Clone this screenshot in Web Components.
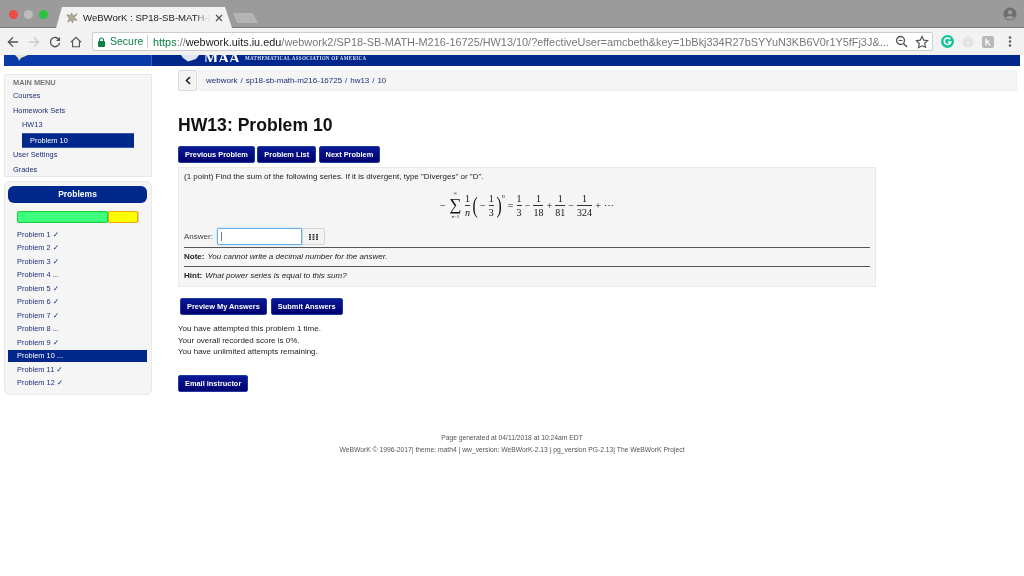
<!DOCTYPE html>
<html lang="en">
<head>
<meta charset="utf-8">
<title>WeBWorK : SP18-SB-MATH-M216</title>
<style>
html, body { margin: 0; height: 100%; background: #fff; overflow: hidden; }
body { font-family: "Liberation Sans", "DejaVu Sans", sans-serif; font-size: 8px; color: #222; filter: blur(.3px); }
.page { display: grid; grid-template-columns: 148px 839px; column-gap: 26px; padding: 4px 0 0 4px; }
</style>
</head>
<body>
<browser-chrome></browser-chrome>
<wb-banner></wb-banner>
<div class="page">
  <wb-sidebar></wb-sidebar>
  <wb-main></wb-main>
</div>
<wb-footer></wb-footer>

<script>
class browser_Chrome extends HTMLElement {
    constructor() {
        super();
        this.attachShadow({ mode: 'open' });
    }

    connectedCallback(){
        this.shadowRoot.innerHTML = `
            <style>
                :host { display: block; height: 55px; font-family: "Liberation Sans", sans-serif; }
                svg { display: block; flex: none; }
                .strip { height: 27px; background: #9b9b9b; border-bottom: 1px solid #7a7a7a; display: flex; align-items: flex-end; }
                .lights { display: flex; gap: 6px; padding: 0 0 8px 9px; width: 56px; box-sizing: border-box; }
                .lights i { width: 9px; height: 9px; border-radius: 50%; flex: none; }
                .tab { width: 176px; height: 21px; margin-bottom: -1px; background: #f2f2f2; box-sizing: border-box; padding: 0 9px 0 10px; display: flex; align-items: center; gap: 5px;
                       clip-path: polygon(0 100%, 6px 0, 169px 0, 176px 100%); font-size: 9.600px; color: #222; white-space: nowrap; }
                .tab span { flex: 1; overflow: hidden; -webkit-mask-image: linear-gradient(90deg, #000 88%, transparent); mask-image: linear-gradient(90deg, #000 88%, transparent); }
                .newtab { width: 25px; height: 10px; margin: 0 0 4px 1px; background: #b4b4b4; clip-path: polygon(0 0, 20px 0, 25px 100%, 4px 100%); }
                .who { margin-left: auto; padding: 0 7px 6px 0; }
                .bar { height: 27px; background: #f2f2f2; display: flex; align-items: center; box-sizing: border-box; padding-left: 7px; }
                .nav { display: flex; align-items: center; gap: 9px; width: 85px; flex: none; }
                .box { width: 841px; height: 19px; box-sizing: border-box; background: #fff; border: 1px solid #ccc; border-radius: 2px; display: flex; align-items: center; padding-left: 4px; font-size: 10.900px; white-space: nowrap; color: #777; flex: none; }
                .sec { color: #0b8043; display: flex; align-items: center; gap: 4px; width: 51px; box-sizing: border-box; border-right: 1px solid #ccc; margin-right: 5px; line-height: 13px; font-size: 10.500px; flex: none; }
                .url { flex: 1; }
                .url b { font-weight: normal; color: #0b8043; }
                .url em { font-style: normal; color: #222; }
                .ends { display: flex; gap: 7px; padding: 0 3px 0 5px; align-items: center; }
                .ext { display: flex; align-items: center; gap: 8px; padding-left: 8px; }
            </style>
            <div class="strip">
                <div class="lights"><i style="background:#f04c47"></i><i style="background:#bcbcbc"></i><i style="background:#2bc23f"></i></div>
                <div class="tab">
                    <svg width="12" height="12" viewBox="0 0 13 13"><path d="M1 3l4 1 1-3 1.500 3.500L12 2 9 6l3 3-4-.5L7 12 5.500 8.500 2 11l1.500-4z" fill="#b3ae93" stroke="#77735f" stroke-width=".6"/></svg>
                    <span>WeBWorK : SP18-SB-MATH-M216</span>
                    <svg width="8" height="8" viewBox="0 0 8 8"><path d="M1 1l6 6M7 1L1 7" stroke="#555" stroke-width="1.300"/></svg>
                </div>
                <div class="newtab"></div>
                <div class="who">
                    <svg width="14" height="14" viewBox="0 0 14 14"><circle cx="7" cy="7" r="6.500" fill="#6e6e6e"/><circle cx="7" cy="5.200" r="2.200" fill="#9b9b9b"/><path d="M2.800 10.600c1-2 7.400-2 8.400 0-1 1.400-2.500 2-4.200 2s-3.200-.6-4.200-2z" fill="#9b9b9b"/></svg>
                </div>
            </div>
            <div class="bar">
                <div class="nav">
                    <svg width="12" height="12" viewBox="0 0 13 13"><path d="M12 6.500H2M6.500 1.500l-5 5 5 5" fill="none" stroke="#555" stroke-width="1.500"/></svg>
                    <svg width="12" height="12" viewBox="0 0 13 13"><path d="M1 6.500h10M6.500 1.500l5 5-5 5" fill="none" stroke="#c9c9c9" stroke-width="1.500"/></svg>
                    <svg width="12" height="12" viewBox="0 0 13 13"><path d="M11 4.200A5 5 0 1 0 11.500 7.500" fill="none" stroke="#555" stroke-width="1.500"/><path d="M12 1v4.500H7.500z" fill="#555"/></svg>
                    <svg width="12" height="12" viewBox="0 0 14 13"><path d="M1 6.800L7 1l6 5.800M3 5.500V12h8V5.500" fill="none" stroke="#555" stroke-width="1.300"/></svg>
                </div>
                <div class="box">
                    <div class="sec">
                        <svg width="9" height="10" viewBox="0 0 9 10"><rect x="1" y="4" width="7" height="6" rx="1" fill="#0b8043"/><path d="M2.500 4.500V3a2 2 0 0 1 4 0v1.500" fill="none" stroke="#0b8043" stroke-width="1.200"/></svg>
                        <span>Secure</span>
                    </div>
                    <div class="url"><b>https</b>://<em>webwork.uits.iu.edu</em>/webwork2/SP18-SB-MATH-M216-16725/HW13/10/?effectiveUser=amcbeth&amp;key=1bBkj334R27bSYYuN3KB6V0r1Y5fFj3J&amp;...</div>
                    <div class="ends">
                        <svg width="13" height="13" viewBox="0 0 13 13"><circle cx="5.500" cy="5.500" r="4" fill="none" stroke="#555" stroke-width="1.300"/><path d="M8.500 8.500l3.500 3.500" stroke="#555" stroke-width="1.500"/><path d="M3.500 5.500h4" stroke="#555"/></svg>
                        <svg width="14" height="14" viewBox="0 0 14 14"><path d="M7 1.500l1.700 3.600 3.900.5-2.900 2.700.8 3.900L7 10.800l-3.500 1.900.8-3.900L1.400 5.600l3.900-.5z" fill="none" stroke="#555" stroke-width="1.200"/></svg>
                    </div>
                </div>
                <div class="ext">
                    <svg width="13" height="13" viewBox="0 0 13 13"><circle cx="6.500" cy="6.500" r="6.500" fill="#15c39a"/><path d="M9.300 4.300A3.300 3.300 0 1 0 9.800 7H7" fill="none" stroke="#fff" stroke-width="1.500"/></svg>
                    <svg width="12" height="12" viewBox="0 0 12 12"><circle cx="6" cy="6" r="5.500" fill="#e2e2e2"/><path d="M6 3v1M6 5v4" stroke="#f4f4f4" stroke-width="1.200"/></svg>
                    <svg width="12" height="12" viewBox="0 0 12 12"><rect width="12" height="12" rx="2" fill="#b9b9b9"/><path d="M4 2.500v7M4 6.500l3-2M5.500 5.500L8 9.500" fill="none" stroke="#fff" stroke-width="1.300"/></svg>
                    <svg width="12" height="13" viewBox="0 0 12 13" style="margin-left:2px"><circle cx="6" cy="2.500" r="1.200" fill="#555"/><circle cx="6" cy="6.500" r="1.200" fill="#555"/><circle cx="6" cy="10.500" r="1.200" fill="#555"/></svg>
                </div>
            </div>
        `;
    }
}

class wb_Banner extends HTMLElement {
    constructor() {
        super();
        this.attachShadow({ mode: 'open' });
    }

    connectedCallback(){
        this.shadowRoot.innerHTML = `
            <style>
                :host { display: flex; height: 11px; margin: 0 4px; background: #00288c; overflow: hidden; color: #fff; }
                svg { display: block; flex: none; }
                .logo { width: 148px; flex: none; background: #0a3aa8; border-right: 1px solid #3a5fb8; box-sizing: border-box; padding: 0 0 0 10px; }
                .maa { display: flex; align-items: flex-end; padding: 0 0 4px 29px; height: 7px; }
                .big { font: bold 15px/7px "Liberation Serif", serif; height: 7px; overflow: hidden; display: flex; align-items: flex-end; margin-left: 5px; }
                .small { font: bold 6px/7px "Liberation Serif", serif; letter-spacing: .32px; margin-left: 5px; white-space: nowrap; color: #d8dff0; transform: scaleX(.84); transform-origin: left; }
            </style>
            <div class="logo"><svg width="22" height="8" viewBox="0 0 22 8"><path d="M1 0h13L7 3 5 6 4 3z" fill="#e9e4cc"/></svg></div>
            <div class="maa">
                <svg width="18" height="7" viewBox="0 0 18 7"><path d="M0 0h18l-3 4-8 2.500L2 3z" fill="#dfe5f2"/></svg>
                <span class="big">MAA</span>
                <span class="small">MATHEMATICAL ASSOCIATION OF AMERICA</span>
            </div>
        `;
    }
}

class wb_Sidebar extends HTMLElement {
    constructor() {
        super();
        this.attachShadow({ mode: 'open' });
    }

    connectedCallback(){
        let rows = [
            ['Problem 1', '\u2713'], ['Problem 2', '\u2713'], ['Problem 3', '\u2713'], ['Problem 4', '...'],
            ['Problem 5', '\u2713'], ['Problem 6', '\u2713'], ['Problem 7', '\u2713'], ['Problem 8', '...'],
            ['Problem 9', '\u2713'], ['Problem 10', '...'], ['Problem 11', '\u2713'], ['Problem 12', '\u2713']
        ];
        let list = rows.map(r => {
            let on = r[0] === 'Problem 10' ? ' class="on"' : '';
            return `<li${on}><span>${r[0]} ${r[1]}</span></li>`;
        }).join('');
        this.shadowRoot.innerHTML = `
            <style>
                :host { display: block; margin-top: 4px; font-size: 7.400px; color: #1c2f7c; font-family: "Liberation Sans", "DejaVu Sans", sans-serif; }
                .menu, .probs { background: #f5f5f5; border: 1px solid #e9e9e9; box-sizing: border-box; }
                .menu { height: 103px; line-height: 14.700px; }
                .menu h4 { margin: 0; height: 14px; line-height: 15px; font-size: 7.400px; font-weight: bold; color: #777; padding-left: 8px; }
                .menu div { padding-left: 8px; height: 14.700px; }
                .menu .l2 { padding-left: 17px; }
                .menu .cur { margin-left: 17px; width: 112px; height: 15px; padding-left: 8px; box-sizing: border-box; background: #00288c; color: #fff; border: 1px solid #3a55a8; border-width: 1px 0; line-height: 13px; }
                .probs { height: 214px; margin-top: 4px; border-radius: 5px; padding: 4px 4px 0 3px; }
                .head { height: 17px; background: #00288c; border-radius: 6px; color: #fff; font-weight: bold; font-size: 8.500px; text-align: center; line-height: 17px; }
                .progress { display: flex; height: 12px; margin: 8px 8px 0 9px; border-radius: 2px; background: #cfcfcf; box-sizing: border-box; padding-right: 1px; }
                .progress i { display: block; box-sizing: border-box; height: 100%; border-radius: 2px; }
                .green { width: 91px; background: #3dfd7c; border: 1px solid #19d23a; }
                .yellow { width: 30px; background: #ffff00; border: 1px solid #f4a800; }
                ul { list-style: none; margin: 4.500px 0 0; padding: 0; }
                li { height: 13.500px; line-height: 13.500px; padding-left: 9px; white-space: nowrap; }
                li.on { background: #00288c; color: #fff; height: 12px; margin: 1px 0 .5px; line-height: 11.500px; }
            </style>
            <div class="menu">
                <h4>MAIN MENU</h4>
                <div>Courses</div>
                <div>Homework Sets</div>
                <div class="l2">HW13</div>
                <div class="cur">Problem 10</div>
                <div>User Settings</div>
                <div>Grades</div>
            </div>
            <div class="probs">
                <div class="head">Problems</div>
                <div class="progress"><i class="green"></i><i class="yellow"></i></div>
                <ul>${list}</ul>
            </div>
        `;
    }
}

class wb_Button extends HTMLElement {
    constructor() {
        super();
        this.attachShadow({ mode: 'open' });
    }

    connectedCallback(){
        this.shadowRoot.innerHTML = `
            <style>
                :host { display: inline-flex; height: 17px; box-sizing: border-box; padding: 0 6px; align-items: center; border-radius: 2px;
                        background: linear-gradient(#0a1a96, #00006e); border: 1px solid #1f3a9e; color: #fff; font: bold 7.400px "Liberation Sans", sans-serif; white-space: nowrap; }
            </style>
            <slot></slot>
        `;
    }
}

class wb_Frac extends HTMLElement {
    constructor() {
        super();
        this.attachShadow({ mode: 'open' });
    }

    connectedCallback(){
        let it = this.hasAttribute('it');
        this.shadowRoot.innerHTML = `
            <style>
                :host { display: inline-flex; flex-direction: column; align-items: center; font: 10px/13px "Liberation Serif", serif; color: #111; }
                .n { border-bottom: .7px solid #333; align-self: stretch; text-align: center; }
            </style>
            <div class="n">${this.getAttribute('n')}</div>
            <div style="${it ? 'font-style:italic' : ''}">${this.getAttribute('d')}</div>
        `;
    }
}

class wb_Formula extends HTMLElement {
    constructor() {
        super();
        this.attachShadow({ mode: 'open' });
    }

    connectedCallback(){
        this.shadowRoot.innerHTML = `
            <style>
                :host { display: flex; justify-content: center; align-items: center; gap: 3.100px; height: 32px; font: 10px "Liberation Serif", serif; color: #111; }
                .sum { display: flex; flex-direction: column; align-items: center; line-height: 6px; font-size: 5px; width: 13px; }
                .sum b { font: normal 17px/15px "Liberation Serif", serif; margin-bottom: 2px; }
                .paren { font: 200 24px/25px "Liberation Serif", serif; transform: scaleX(.65); margin: 0 -2px; }
                sup { font-size: 5.500px; font-style: italic; align-self: flex-start; margin: 4px 0 0 -2px; }
            </style>
            <span>&minus;</span>
            <span class="sum"><span>&infin;</span><b>&sum;</b><span><i>n</i>=1</span></span>
            <wb-frac n="1" d="n" it></wb-frac>
            <span class="paren">(</span><span>&minus;</span><wb-frac n="1" d="3"></wb-frac><span class="paren">)</span><sup>n</sup>
            <span>=</span><wb-frac n="1" d="3"></wb-frac>
            <span>&minus;</span><wb-frac n="1" d="18"></wb-frac>
            <span>+</span><wb-frac n="1" d="81"></wb-frac>
            <span>&minus;</span><wb-frac n="1" d="324"></wb-frac>
            <span>+</span><span>&#8943;</span>
        `;
    }
}

class wb_Main extends HTMLElement {
    constructor() {
        super();
        this.attachShadow({ mode: 'open' });
    }

    connectedCallback(){
        this.shadowRoot.innerHTML = `
            <style>
                :host { display: block; font: 8px "Liberation Sans", sans-serif; color: #222; }
                .crumbs { display: flex; height: 21px; gap: 1px; }
                .back { width: 19px; background: #f4f4f4; border: 1px solid #d9d9d9; border-radius: 2px; box-sizing: border-box; display: flex; align-items: center; justify-content: center; }
                .trail { flex: 1; background: #f5f5f5; border: 1px solid #eee; border-radius: 2px; padding-left: 7px; display: flex; align-items: center; color: #1c2f7c; white-space: pre; word-spacing: .7px; }
                h1 { margin: 23px 0 10px; font: bold 17.600px/22px "Liberation Sans", sans-serif; color: #111; }
                .nav { display: flex; gap: 2.500px; }
                .well { width: 698px; height: 120px; margin-top: 4px; box-sizing: border-box; background: #f5f5f5; border: 1px solid #e9e9e9; padding: 4px 5px 0 5px; }
                .q { line-height: 10px; }
                wb-formula { margin-top: 7px; }
                .ans { display: flex; align-items: center; height: 17px; margin-top: 7px; color: #444; }
                .ans span { width: 33px; }
                .input { width: 85px; height: 17px; box-sizing: border-box; background: #fff; border: 1px solid #66afe9; border-radius: 2px 0 0 2px; box-shadow: 0 0 2px #8ccaf2; display: flex; align-items: center; padding-left: 3px; }
                .input i { width: 1px; height: 9px; background: #777; }
                .grid { width: 23px; height: 17px; box-sizing: border-box; background: #f3f3f3; border: 1px solid #d5d5d5; border-radius: 0 2px 2px 0; display: flex; align-items: center; justify-content: center; }
                .note { margin-top: 2px; height: 18.500px; border-top: 1px solid #555; display: flex; align-items: center; box-sizing: border-box; }
                .note + .note { margin-top: 0; }
                .note i { margin-left: 3px; }
                .sub { display: flex; gap: 4px; margin: 11px 0 0 2px; }
                .status { margin-top: 8px; line-height: 11.500px; color: #222; }
                .mail { margin-top: 17px; }
            </style>
            <div class="crumbs">
                <div class="back"><svg width="6" height="9" viewBox="0 0 6 9"><path d="M5 1L1.500 4.500 5 8" fill="none" stroke="#222" stroke-width="1.600"/></svg></div>
                <div class="trail">webwork / sp18-sb-math-m216-16725 / hw13 / 10</div>
            </div>
            <h1>HW13: Problem 10</h1>
            <div class="nav">
                <wb-button>Previous Problem</wb-button>
                <wb-button>Problem List</wb-button>
                <wb-button>Next Problem</wb-button>
            </div>
            <div class="well">
                <div class="q">(1 point) Find the sum of the following series. If it is divergent, type "Diverges" or "D".</div>
                <wb-formula></wb-formula>
                <div class="ans">
                    <span>Answer:</span>
                    <div class="input"><i></i></div>
                    <div class="grid"><svg width="9" height="6" viewBox="0 0 9 6" fill="#333"><path d="M0 0h2v1.500H0zM3.500 0h2v1.500h-2zM7 0h2v1.500H7zM0 2.300h2v1.500H0zM3.500 2.300h2v1.500h-2zM7 2.300h2v1.500H7zM0 4.500h2V6H0zM3.500 4.500h2V6h-2zM7 4.500h2V6H7z"/></svg></div>
                </div>
                <div class="note"><b>Note:</b><i>You cannot write a decimal number for the answer.</i></div>
                <div class="note"><b>Hint:</b><i>What power series is equal to this sum?</i></div>
            </div>
            <div class="sub">
                <wb-button>Preview My Answers</wb-button>
                <wb-button>Submit Answers</wb-button>
            </div>
            <div class="status">You have attempted this problem 1 time.<br>Your overall recorded score is 0%.<br>You have unlimited attempts remaining.</div>
            <div class="mail"><wb-button>Email instructor</wb-button></div>
        `;
    }
}

class wb_Footer extends HTMLElement {
    constructor() {
        super();
        this.attachShadow({ mode: 'open' });
    }

    connectedCallback(){
        this.shadowRoot.innerHTML = `
            <style>
                :host { display: block; margin-top: 37px; text-align: center; font: 6.750px/12px "Liberation Sans", sans-serif; color: #555; }
            </style>
            <div>Page generated at 04/11/2018 at 10:24am EDT</div>
            <div>WeBWorK &copy; 1996-2017| theme: math4 | ww_version: WeBWorK-2.13 | pg_version PG-2.13| The WeBWorK Project</div>
        `;
    }
}

customElements.define('browser-chrome', browser_Chrome);
customElements.define('wb-banner', wb_Banner);
customElements.define('wb-sidebar', wb_Sidebar);
customElements.define('wb-button', wb_Button);
customElements.define('wb-frac', wb_Frac);
customElements.define('wb-formula', wb_Formula);
customElements.define('wb-main', wb_Main);
customElements.define('wb-footer', wb_Footer);
</script>
</body>
</html>
